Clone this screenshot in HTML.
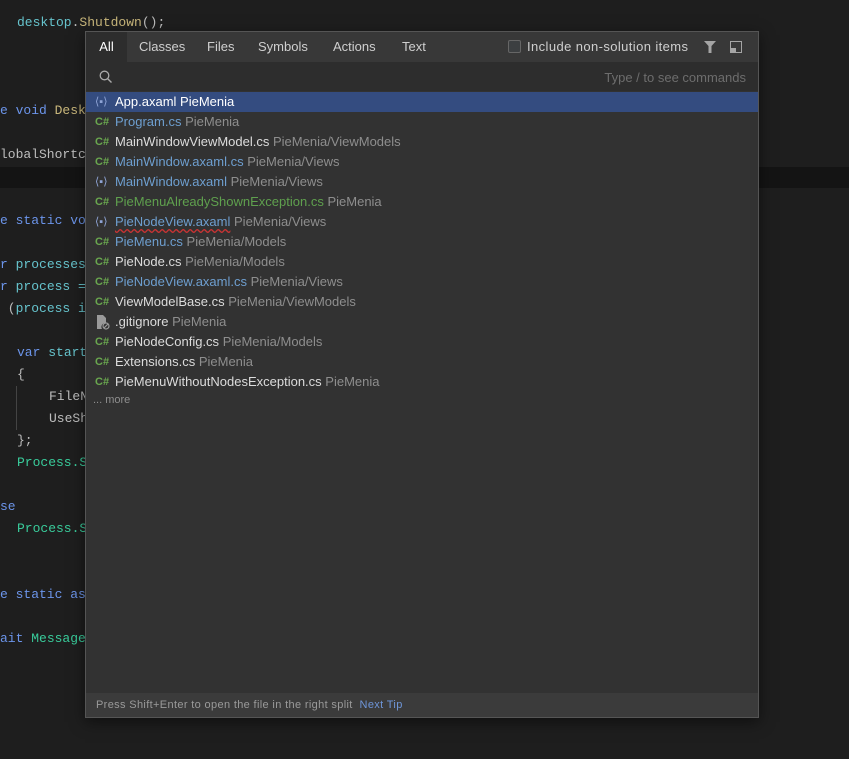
<!DOCTYPE html>
<html><head><meta charset="utf-8"><style>
*{margin:0;padding:0;box-sizing:border-box}
body{width:849px;height:759px;background:#1e1e1e;position:relative;overflow:hidden;font-family:"Liberation Sans",sans-serif}
.code{position:absolute;font-family:"Liberation Mono",monospace;font-size:13px;white-space:pre;line-height:16px}
.band{position:absolute;left:0;top:167px;width:849px;height:21px;background:#141414}
.kw{color:#6c95eb}.tl{color:#39cc9b}.pl{color:#bdbdbd}.lb{color:#66c3cc}.ye{color:#c9b77b}
.pop{position:absolute;left:85px;top:31px;width:674px;height:687px;background:#323232;border:1px solid #555;box-shadow:0 4px 14px rgba(0,0,0,.5)}
.tabs{height:30px;background:#383838;position:relative;font-size:13px;color:#cfcfcf}
.tab{position:absolute;top:0;height:30px;line-height:30px}
.search{height:29px;background:#2d2d2d;position:relative}
.row{height:20px;line-height:20px;font-size:13px;position:relative;padding-left:29px;white-space:nowrap}
.row .ic{position:absolute;left:9px;top:0;font-size:11px;font-weight:bold;color:#6aa84f}
.n{color:#dcdcdc}.nb{color:#6e9fd0}.ng{color:#5fa04e}.p{color:#8e8e8e}
.sel{background:#344c80}.sel .n,.sel .p{color:#fff}
.footer{position:absolute;left:0;bottom:0;width:672px;height:24px;background:#3b3b3b;font-size:11px;letter-spacing:0.35px;color:#9a9a9a;line-height:24px;padding-left:10px}
</style></head><body>
<div class="band"></div>
<div class="code" style="left:17px;top:15px"><span class="lb">desktop</span><span class="pl">.</span><span class="ye">Shutdown</span><span class="pl">();</span></div>
<div class="code" style="left:0;top:103px"><span class="kw">e void </span><span class="ye">Desk</span></div>
<div class="code" style="left:0;top:147px"><span class="pl">lobalShortc</span></div>
<div class="code" style="left:0;top:213px"><span class="kw">e static vo</span></div>
<div class="code" style="left:0;top:257px"><span class="kw">r </span><span class="lb">processes</span></div>
<div class="code" style="left:0;top:279px"><span class="kw">r </span><span class="lb">process =</span></div>
<div class="code" style="left:0;top:301px"><span class="pl"> (</span><span class="lb">process i</span></div>
<div class="code" style="left:17px;top:345px"><span class="kw">var </span><span class="lb">start</span></div>
<div class="code" style="left:17px;top:367px"><span class="pl">{</span></div>
<div style="position:absolute;left:16px;top:386px;width:1px;height:44px;background:#444"></div>
<div class="code" style="left:49px;top:389px"><span class="pl">FileN</span></div>
<div class="code" style="left:49px;top:411px"><span class="pl">UseSh</span></div>
<div class="code" style="left:17px;top:433px"><span class="pl">};</span></div>
<div class="code" style="left:17px;top:455px"><span class="tl">Process.S</span></div>
<div class="code" style="left:0;top:499px"><span class="kw">se</span></div>
<div class="code" style="left:17px;top:521px"><span class="tl">Process.S</span></div>
<div class="code" style="left:0;top:587px"><span class="kw">e static as</span></div>
<div class="code" style="left:0;top:631px"><span class="kw">ait </span><span class="tl">Message</span></div>

<div class="pop">
 <div class="tabs">
  <div class="tab" style="left:0;width:41px;background:#2d2d2d;color:#fff;text-align:center">All</div>
  <div class="tab" style="left:53px">Classes</div>
  <div class="tab" style="left:121px">Files</div>
  <div class="tab" style="left:172px">Symbols</div>
  <div class="tab" style="left:247px">Actions</div>
  <div class="tab" style="left:316px">Text</div>
  <div style="position:absolute;left:422px;top:8px;width:13px;height:13px;border:1px solid #666;border-radius:2px;background:#3c3f41"></div>
  <div class="tab" style="left:441px;letter-spacing:0.4px">Include non-solution items</div>
  <svg style="position:absolute;left:617px;top:9px" width="14" height="12" viewBox="0 0 14 12"><path d="M1 0H13L8.5 5V12H5.5V5Z" fill="#a5a5a5"/></svg>
  <svg style="position:absolute;left:644px;top:9px" width="12" height="12" viewBox="0 0 12 12"><rect x="0.5" y="0.5" width="11" height="11" fill="none" stroke="#a5a5a5"/><rect x="1" y="7" width="5" height="4" fill="#a5a5a5"/></svg>
 </div>
 <div class="search">
  <svg style="position:absolute;left:13px;top:8px" width="14" height="14" viewBox="0 0 14 14"><circle cx="5.5" cy="5.5" r="4.3" fill="none" stroke="#aaa" stroke-width="1.3"/><path d="M8.7 8.7L12.5 12.5" stroke="#aaa" stroke-width="1.4"/></svg>
  <div style="position:absolute;right:12px;top:0;line-height:31px;font-size:13px;color:#6d6d6d">Type / to see commands</div>
 </div>
 <div style="height:1px"></div>
 <div class="row sel"><span class="ic" style="color:#8fa4d6;font-weight:normal">⟨▪⟩</span><span class="n">App.axaml</span> <span class="p">PieMenia</span></div>
 <div class="row"><span class="ic">C#</span><span class="nb">Program.cs</span> <span class="p">PieMenia</span></div>
 <div class="row"><span class="ic">C#</span><span class="n">MainWindowViewModel.cs</span> <span class="p">PieMenia/ViewModels</span></div>
 <div class="row"><span class="ic">C#</span><span class="nb">MainWindow.axaml.cs</span> <span class="p">PieMenia/Views</span></div>
 <div class="row"><span class="ic" style="color:#8fa4d6;font-weight:normal">⟨▪⟩</span><span class="nb">MainWindow.axaml</span> <span class="p">PieMenia/Views</span></div>
 <div class="row"><span class="ic">C#</span><span class="ng">PieMenuAlreadyShownException.cs</span> <span class="p">PieMenia</span></div>
 <div class="row"><span class="ic" style="color:#8fa4d6;font-weight:normal">⟨▪⟩</span><span class="nb" style="text-decoration:underline wavy #c33;text-underline-offset:2px">PieNodeView.axaml</span> <span class="p">PieMenia/Views</span></div>
 <div class="row"><span class="ic">C#</span><span class="nb">PieMenu.cs</span> <span class="p">PieMenia/Models</span></div>
 <div class="row"><span class="ic">C#</span><span class="n">PieNode.cs</span> <span class="p">PieMenia/Models</span></div>
 <div class="row"><span class="ic">C#</span><span class="nb">PieNodeView.axaml.cs</span> <span class="p">PieMenia/Views</span></div>
 <div class="row"><span class="ic">C#</span><span class="n">ViewModelBase.cs</span> <span class="p">PieMenia/ViewModels</span></div>
 <div class="row"><svg class="ic" style="top:3px;left:10px" width="14" height="15" viewBox="0 0 14 15"><path d="M1 0H7L10 3V8A4 4 0 0 0 6 14H1Z" fill="#9a9a9a"/><circle cx="10" cy="11" r="3" fill="none" stroke="#9a9a9a" stroke-width="1.2"/><path d="M8 13L12 9" stroke="#9a9a9a" stroke-width="1.2"/></svg><span class="n">.gitignore</span> <span class="p">PieMenia</span></div>
 <div class="row"><span class="ic">C#</span><span class="n">PieNodeConfig.cs</span> <span class="p">PieMenia/Models</span></div>
 <div class="row"><span class="ic">C#</span><span class="n">Extensions.cs</span> <span class="p">PieMenia</span></div>
 <div class="row"><span class="ic">C#</span><span class="n">PieMenuWithoutNodesException.cs</span> <span class="p">PieMenia</span></div>
 <div style="font-size:11px;color:#8e8e8e;padding-left:7px;line-height:16px">... more</div>
 <div class="footer">Press Shift+Enter to open the file in the right split&nbsp; <span style="color:#6e95d8">Next Tip</span></div>
</div>
</body></html>
